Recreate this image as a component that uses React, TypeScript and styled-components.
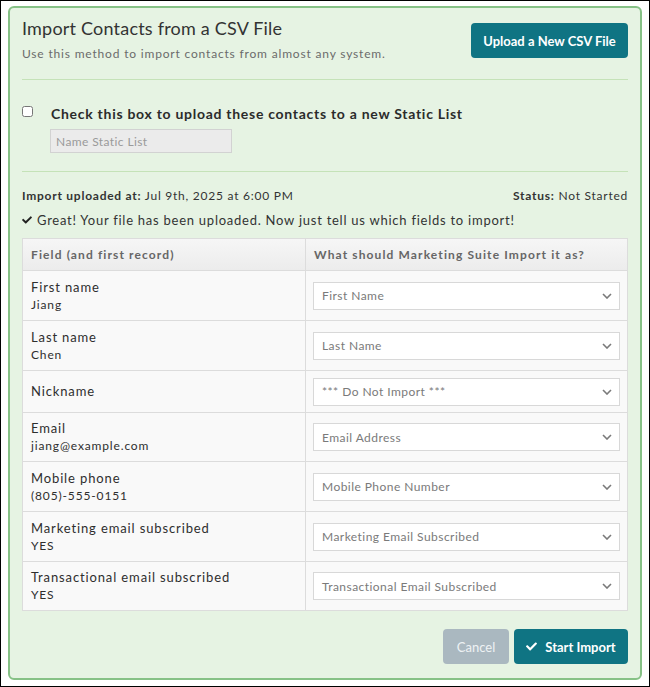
import React from "react";
import styled, { createGlobalStyle } from "styled-components";
import { FaCheck } from "react-icons/fa";

const GlobalStyle = createGlobalStyle`
  html, body {
    margin: 0;
    padding: 0;
    background: #ffffff;
  }
  body {
    font-family: Lato, "Open Sans", Arial, sans-serif;
    color: #333333;
  }
  * { box-sizing: border-box; }
`;

const Frame = styled.div`
  width: 650px;
  height: 687px;
  border: 1px solid #000000;
  padding: 5px 7px 6px 7px;
  background: #ffffff;
`;

const Card = styled.section`
  height: 674px;
  background: #e6f3e3;
  border: 2px solid #86c186;
  border-radius: 6px;
  padding: 8px 12px 14px 12px;
  display: flex;
  flex-direction: column;
`;

const Header = styled.header`
  display: flex;
  justify-content: space-between;
  align-items: flex-start;
`;

const TitleBlock = styled.div`
  display: flex;
  flex-direction: column;
`;

const Title = styled.h1`
  margin: 0;
  font-size: 18px;
  line-height: 24px;
  font-weight: 400;
  color: #333333;
  letter-spacing: 0.2px;
`;

const Subtitle = styled.p`
  margin: 6px 0 0 0;
  font-size: 12px;
  line-height: 16px;
  color: #6b6b6b;
  letter-spacing: 0.82px;
`;

const PrimaryButton = styled.button<{ $width: number }>`
  width: ${(p) => p.$width}px;
  height: 35px;
  border: none;
  border-radius: 4px;
  background: #0f7483;
  color: #ffffff;
  font-family: inherit;
  font-size: 13px;
  font-weight: 700;
  display: inline-flex;
  align-items: center;
  justify-content: center;
  gap: 8px;
  cursor: pointer;
  padding: 0;
`;

const UploadButton = styled(PrimaryButton)`
  margin-top: 7px;
`;

const CancelButton = styled.button`
  width: 66px;
  height: 35px;
  border: none;
  border-radius: 4px;
  background: #aab8c0;
  color: #eef2f4;
  font-family: inherit;
  font-size: 13px;
  font-weight: 400;
  padding: 0;
`;

const Divider = styled.hr<{ $top: number }>`
  margin: ${(p) => p.$top}px 0 0 0;
  border: none;
  height: 1px;
  background: #c5e2b8;
`;

const CheckRow = styled.label`
  margin-top: 23px;
  display: flex;
  align-items: center;
  height: 20px;
  gap: 18px;
  font-size: 14px;
  font-weight: 700;
  color: #2b2b2b;
  letter-spacing: 0.72px;
`;

const Box = styled.input`
  width: 11px;
  height: 11px;
  margin: 0;
  position: relative;
  top: -2px;
`;

const NameInput = styled.input`
  margin: 6px 0 0 28px;
  width: 182px;
  height: 24px;
  background: #ebebeb;
  border: 1px solid #d2d2d2;
  font-family: inherit;
  font-size: 12px;
  color: #555555;
  padding: 0 5px;
  letter-spacing: 0.4px;
  &::placeholder {
    color: #9a9a9a;
  }
`;

const InfoRow = styled.div`
  margin-top: 15px;
  display: flex;
  justify-content: space-between;
  font-size: 12px;
  line-height: 18px;
  color: #333333;
  letter-spacing: 0.75px;
`;

const Strong = styled.b`
  font-weight: 700;
`;

const Notice = styled.div`
  margin-top: 6px;
  font-size: 13px;
  line-height: 18px;
  color: #333333;
  display: flex;
  align-items: center;
  gap: 5px;
  letter-spacing: 0.75px;
`;

const Table = styled.div`
  margin-top: 9px;
  border: 1px solid #dcdcdc;
  background: #f9f9f9;
`;

const Row = styled.div<{ $height: number }>`
  display: grid;
  grid-template-columns: 282px 1fr;
  height: ${(p) => p.$height}px;
  border-top: 1px solid #dcdcdc;
  &:first-child {
    border-top: none;
  }
`;

const HeadRow = styled(Row)`
  background: linear-gradient(#f6f6f6, #ececec);
`;

const HeadCell = styled.div<{ $divided?: boolean }>`
  display: flex;
  align-items: center;
  padding: 0 8px;
  font-size: 12px;
  font-weight: 700;
  color: #666666;
  letter-spacing: 1.12px;
  border-left: ${(p) => (p.$divided ? "1px solid #dcdcdc" : "none")};
`;

const FieldCell = styled.div`
  display: flex;
  flex-direction: column;
  justify-content: center;
  padding: 0 8px;
`;

const FieldName = styled.div`
  font-size: 13px;
  line-height: 17px;
  color: #2e2e2e;
  letter-spacing: 0.87px;
`;

const FieldValue = styled.div`
  font-size: 12px;
  line-height: 17px;
  color: #2e2e2e;
  letter-spacing: 0.85px;
`;

const SelectCell = styled.div`
  display: flex;
  align-items: center;
  padding: 0 7px;
  border-left: 1px solid #dcdcdc;
`;

const SelectBox = styled.div`
  position: relative;
  width: 100%;
  height: 28px;
  background: #ffffff;
  border: 1px solid #d8d8d8;
  display: flex;
  align-items: center;
  padding: 0 8px;
  font-size: 12px;
  color: #7a7a7a;
  letter-spacing: 0.45px;
`;

const Chevron = styled.svg`
  position: absolute;
  right: 7px;
  top: 50%;
  margin-top: -3px;
`;

const Footer = styled.div`
  margin-top: auto;
  display: flex;
  justify-content: flex-end;
  gap: 5px;
`;

type Mapping = { field: string; value?: string; target: string; height: number };

const mappings: Mapping[] = [
  { field: "First name", value: "Jiang", target: "First Name", height: 50 },
  { field: "Last name", value: "Chen", target: "Last Name", height: 50 },
  { field: "Nickname", target: "*** Do Not Import ***", height: 42 },
  { field: "Email", value: "jiang@example.com", target: "Email Address", height: 49 },
  { field: "Mobile phone", value: "(805)-555-0151", target: "Mobile Phone Number", height: 50 },
  { field: "Marketing email subscribed", value: "YES", target: "Marketing Email Subscribed", height: 50 },
  { field: "Transactional email subscribed", value: "YES", target: "Transactional Email Subscribed", height: 49 },
];

function Select({ label }: { label: string }) {
  return (
    <SelectBox>
      {label}
      <Chevron width="10" height="6" viewBox="0 0 10 6">
        <polyline points="1,1 5,5 9,1" fill="none" stroke="#7a7a7a" strokeWidth="1.6" />
      </Chevron>
    </SelectBox>
  );
}

export default function App() {
  return (
    <>
      <GlobalStyle />
      <Frame>
        <Card>
          <Header>
            <TitleBlock>
              <Title>Import Contacts from a CSV File</Title>
              <Subtitle>Use this method to import contacts from almost any system.</Subtitle>
            </TitleBlock>
            <UploadButton $width={157}>Upload a New CSV File</UploadButton>
          </Header>
          <Divider $top={17} />

          <CheckRow>
            <Box type="checkbox" />
            Check this box to upload these contacts to a new Static List
          </CheckRow>
          <NameInput placeholder="Name Static List" />
          <Divider $top={18} />

          <InfoRow>
            <span>
              <Strong>Import uploaded at:</Strong> Jul 9th, 2025 at 6:00 PM
            </span>
            <span>
              <Strong>Status:</Strong> Not Started
            </span>
          </InfoRow>
          <Notice>
            <FaCheck size={10} color="#222" />
            Great! Your file has been uploaded. Now just tell us which fields to import!
          </Notice>

          <Table>
            <HeadRow $height={31}>
              <HeadCell>Field (and first record)</HeadCell>
              <HeadCell $divided>What should Marketing Suite Import it as?</HeadCell>
            </HeadRow>
            {mappings.map((m) => (
              <Row key={m.field} $height={m.height}>
                <FieldCell>
                  <FieldName>{m.field}</FieldName>
                  {m.value && <FieldValue>{m.value}</FieldValue>}
                </FieldCell>
                <SelectCell>
                  <Select label={m.target} />
                </SelectCell>
              </Row>
            ))}
          </Table>

          <Footer>
            <CancelButton>Cancel</CancelButton>
            <PrimaryButton $width={114}>
              <FaCheck size={11} />
              Start Import
            </PrimaryButton>
          </Footer>
        </Card>
      </Frame>
    </>
  );
}
